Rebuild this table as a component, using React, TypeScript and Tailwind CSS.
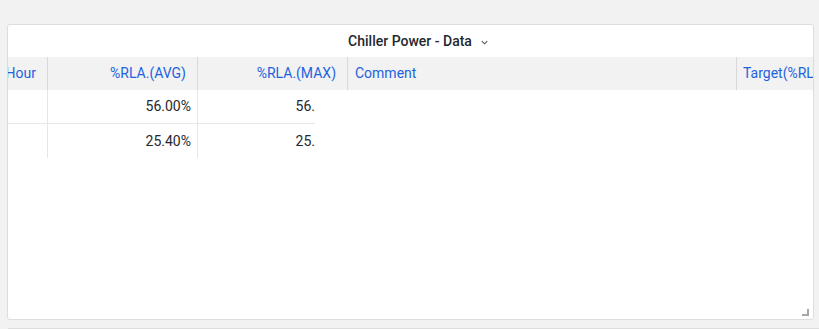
import React from "react";

const rows = [
  { avg: "56.00%", max: "56.00%" },
  { avg: "25.40%", max: "25.40%" },
];

const ChillerTable = () => {
  return (
    <div
      className="relative w-[819px] h-[329px] overflow-hidden bg-[#f1f2f1] pt-[24px] pl-[7px]"
      style={{ fontFamily: "Roboto, 'Liberation Sans', sans-serif" }}
    >
      {/* Panel */}
      <div className="relative w-[807px] h-[296px] bg-white border border-[#dcdddc] rounded-[3px] overflow-hidden">
        {/* Title */}
        <div className="h-[32px] flex items-center justify-center gap-[8px] pl-[16px] text-[14px] font-medium text-[#24292e]">
          <span>Chiller Power - Data</span>
          <svg width="9" height="9" viewBox="0 0 10 10" className="mt-[3px]">
            <path d="M2 3.5 L5 6.5 L8 3.5" fill="none" stroke="#555" strokeWidth="1.2" />
          </svg>
        </div>

        {/* Header row */}
        <div className="flex h-[33px] bg-[#f1f2f1] text-[14px] text-[#1f62e0] whitespace-nowrap">
          <div className="w-[39px] shrink-0 flex items-center justify-end pr-[11px]">Hour</div>
          <div className="w-[150px] shrink-0 flex items-center justify-end pr-[11px] border-l border-[#d8d9d8]">%RLA.(AVG)</div>
          <div className="w-[150px] shrink-0 flex items-center justify-end pr-[11px] border-l border-[#d8d9d8]">%RLA.(MAX)</div>
          <div className="w-[389px] shrink-0 flex items-center pl-[7px] border-l border-[#d8d9d8]">Comment</div>
          <div className="flex-1 flex items-center pl-[6px] border-l border-[#d8d9d8] overflow-hidden">Target(%RLA)</div>
        </div>

        {/* Body, clipped to the first two and a half columns */}
        <div className="w-[307px] overflow-hidden text-[14px] text-[#24292e] whitespace-nowrap">
          {rows.map((r, i) => (
            <div
              key={i}
              className={`flex h-[34px] w-[339px] ${i === 0 ? "border-b border-[#e6e7e6]" : ""}`}
            >
              <div className="w-[39px] shrink-0" />
              <div className="w-[150px] shrink-0 flex items-center justify-end pr-[6px] border-l border-[#e6e7e6]">{r.avg}</div>
              <div className="w-[150px] shrink-0 flex items-center justify-end pr-[6px] border-l border-[#e6e7e6]">{r.max}</div>
            </div>
          ))}
        </div>

        {/* Resize handle */}
        <svg width="7" height="7" viewBox="0 0 7 7" className="absolute right-[4px] bottom-[3px]">
          <path d="M6 0 V6 H0" fill="none" stroke="#a5a6a5" strokeWidth="2" />
        </svg>
      </div>

      {/* Next panel edge */}
      <div className="absolute left-[8px] right-0 top-[328px] border-t border-[#dcdddc]" />
    </div>
  );
};

export default function App() {
  return <ChillerTable />;
}
